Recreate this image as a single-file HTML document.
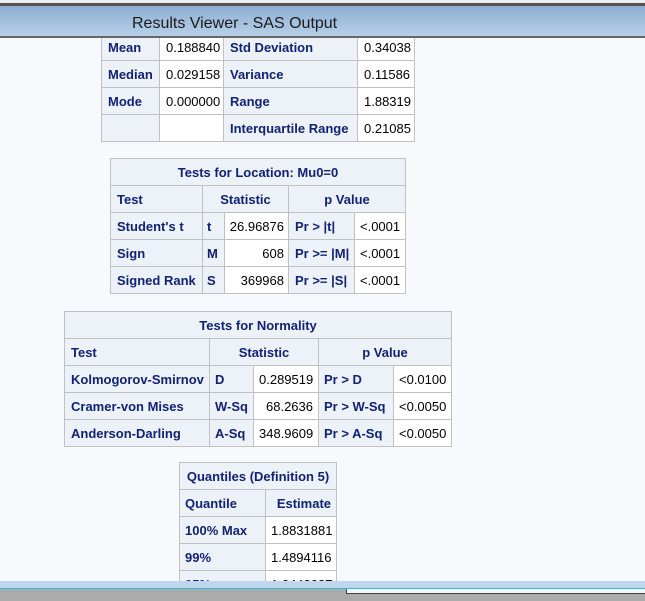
<!DOCTYPE html>
<html><head><meta charset="utf-8"><style>
*{margin:0;padding:0;box-sizing:border-box}
html,body{width:645px;height:601px;overflow:hidden;background:#f8f9fd;font-family:"Liberation Sans",Arial,sans-serif;position:relative}
.top{position:absolute;left:0;top:0;width:645px;height:38px;z-index:5;background:#eeeeee}
.top .dk{position:absolute;left:0;top:3px;width:645px;height:3px;background:#555}
.top .bar{position:absolute;left:0;top:6px;width:645px;height:30px;background:linear-gradient(#8eaed0,#b7cfe8)}
.top .ln{position:absolute;left:0;top:36px;width:645px;height:2px;background:#666}
.top .t{position:absolute;left:132px;top:15px;font-size:16px;color:#1a1a1a;line-height:18px}
table{position:absolute;border-collapse:collapse;table-layout:fixed;font-size:13px}
td{border:1px solid #c1c1c1;height:27px;padding:0 6px;white-space:nowrap;overflow:hidden;background:#fff;color:#000}
td.h{background:#edf2f9;color:#112277;font-weight:bold}
td.c{text-align:center}
td.r{text-align:right}
.bot1{position:absolute;left:0;top:581px;width:645px;height:7px;background:#c0d6ec}
.bot2{position:absolute;left:0;top:588px;width:645px;height:1px;background:#2cc0d8}
.bot3{position:absolute;left:0;top:589px;width:645px;height:12px;background:#ababab}
.bot4{position:absolute;left:346px;top:589px;width:299px;height:5px;background:#f4f6f9;border:1px solid #444;border-top:none;border-right:none}
</style></head><body>
<div class="top"><div class="dk"></div><div class="bar"></div><div class="ln"></div><div class="t">Results Viewer - SAS Output</div></div>

<table style="left:101px;top:33px;width:313px">
<colgroup><col style="width:58px"><col style="width:64px"><col style="width:134px"><col style="width:57px"></colgroup>
<tr><td class="h">Mean</td><td>0.188840</td><td class="h">Std Deviation</td><td>0.34038</td></tr>
<tr><td class="h">Median</td><td>0.029158</td><td class="h">Variance</td><td>0.11586</td></tr>
<tr><td class="h">Mode</td><td>0.000000</td><td class="h">Range</td><td>1.88319</td></tr>
<tr><td class="h"></td><td></td><td class="h">Interquartile Range</td><td>0.21085</td></tr>
</table>

<table style="left:110px;top:158px;width:295px">
<colgroup><col style="width:92px"><col style="width:22px"><col style="width:64px"><col style="width:66px"><col style="width:51px"></colgroup>
<tr><td class="h c" colspan="5">Tests for Location: Mu0=0</td></tr>
<tr><td class="h">Test</td><td class="h c" colspan="2">Statistic</td><td class="h c" colspan="2">p Value</td></tr>
<tr><td class="h">Student's t</td><td class="h" style="padding:0 4px">t</td><td class="r" style="padding:0 4px">26.96876</td><td class="h">Pr &gt; |t|</td><td style="padding:0 5px">&lt;.0001</td></tr>
<tr><td class="h">Sign</td><td class="h" style="padding:0 4px">M</td><td class="r" style="padding:0 4px">608</td><td class="h">Pr &gt;= |M|</td><td style="padding:0 5px">&lt;.0001</td></tr>
<tr><td class="h">Signed Rank</td><td class="h" style="padding:0 4px">S</td><td class="r" style="padding:0 4px">369968</td><td class="h">Pr &gt;= |S|</td><td style="padding:0 5px">&lt;.0001</td></tr>
</table>

<table style="left:64px;top:311px;width:387px">
<colgroup><col style="width:145px"><col style="width:44px"><col style="width:65px"><col style="width:75px"><col style="width:58px"></colgroup>
<tr><td class="h c" colspan="5">Tests for Normality</td></tr>
<tr><td class="h">Test</td><td class="h c" colspan="2">Statistic</td><td class="h c" colspan="2">p Value</td></tr>
<tr><td class="h">Kolmogorov-Smirnov</td><td class="h" style="padding:0 5px">D</td><td class="r" style="padding:0 5px">0.289519</td><td class="h" style="padding:0 5px">Pr &gt; D</td><td class="r" style="padding:0 5px">&lt;0.0100</td></tr>
<tr><td class="h">Cramer-von Mises</td><td class="h" style="padding:0 5px">W-Sq</td><td class="r" style="padding:0 5px">68.2636</td><td class="h" style="padding:0 5px">Pr &gt; W-Sq</td><td class="r" style="padding:0 5px">&lt;0.0050</td></tr>
<tr><td class="h">Anderson-Darling</td><td class="h" style="padding:0 5px">A-Sq</td><td class="r" style="padding:0 5px">348.9609</td><td class="h" style="padding:0 5px">Pr &gt; A-Sq</td><td class="r" style="padding:0 5px">&lt;0.0050</td></tr>
</table>

<table style="left:179px;top:462px;width:157px">
<colgroup><col style="width:86px"><col style="width:71px"></colgroup>
<tr><td class="h c" colspan="2" style="padding:0 4px">Quantiles (Definition 5)</td></tr>
<tr><td class="h" style="padding:0 5px">Quantile</td><td class="h r" style="padding:0 5px">Estimate</td></tr>
<tr><td class="h" style="padding:0 5px">100% Max</td><td class="r" style="padding:0 5px">1.8831881</td></tr>
<tr><td class="h" style="padding:0 5px">99%</td><td class="r" style="padding:0 5px">1.4894116</td></tr>
<tr><td class="h" style="padding:0 5px">95%</td><td class="r" style="padding:0 5px">1.0448087</td></tr>
</table>

<div class="bot1"></div><div class="bot2"></div><div class="bot3"></div><div class="bot4"></div>
</body></html>
